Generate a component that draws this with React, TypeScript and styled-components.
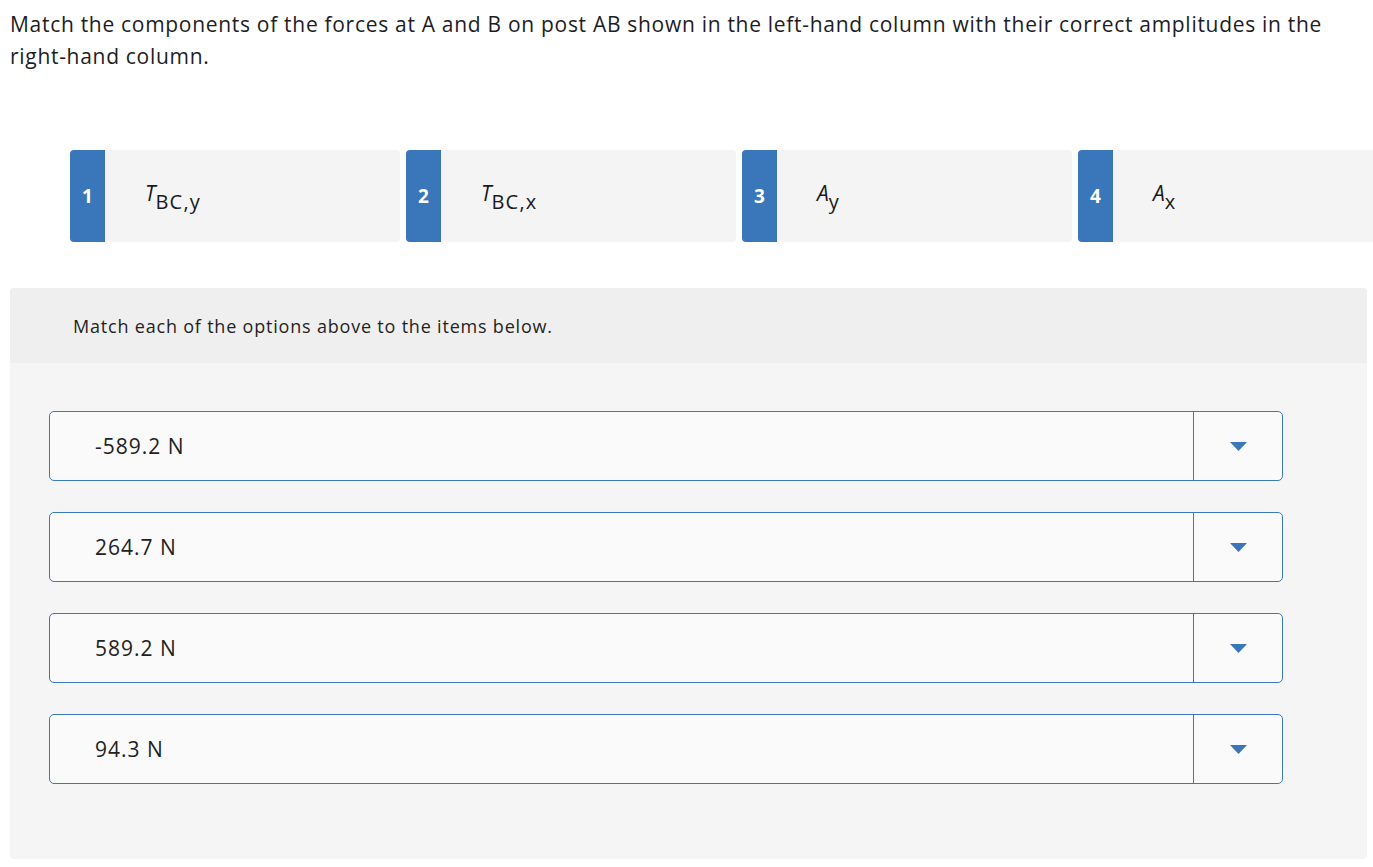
import styled, { createGlobalStyle } from "styled-components";

const Global = createGlobalStyle`
  html, body {
    margin: 0;
    background: #fff;
    overflow-x: hidden;
  }
  body {
    font-family: "Open Sans", Lato, Arial, sans-serif;
    color: #1d1d24;
  }
`;

const Page = styled.div`
  padding: 8px 10px 0 10px;
  width: 1353px;
`;

const Prompt = styled.p`
  margin: 0;
  font-size: 21px;
  line-height: 32px;
  letter-spacing: 0.7px;
`;

const CardRow = styled.div`
  display: flex;
  gap: 6px;
  margin-top: 78px;
  padding-left: 60px;
`;

const Card = styled.div`
  flex: 0 0 330px;
  height: 92px;
  display: flex;
  background: #f4f4f4;
  border-radius: 4px;
  overflow: hidden;
`;

const Badge = styled.div`
  width: 35px;
  flex-shrink: 0;
  background: #3a76ba;
  color: #fff;
  font-weight: 700;
  font-size: 19px;
  display: flex;
  align-items: center;
  justify-content: center;
`;

const Label = styled.div`
  display: flex;
  align-items: center;
  padding-left: 40px;
  font-size: 21px;
  color: #1a1a1a;
`;

const Main = styled.i`
  font-style: italic;
  position: relative;
  top: -3px;
`;

const Sub = styled.span`
  font-size: 20px;
  letter-spacing: 1.2px;
  position: relative;
  top: 5px;
`;

const Panel = styled.div`
  margin-top: 46px;
  width: 1357px;
  background: #f5f5f5;
  border-radius: 4px;
  overflow: hidden;
`;

const PanelHead = styled.div`
  height: 75px;
  background: #efefef;
  display: flex;
  align-items: center;
  padding-left: 63px;
  font-size: 18px;
  letter-spacing: 0.8px;
  color: #1f1f24;
`;

const PanelBody = styled.div`
  display: flex;
  flex-direction: column;
  gap: 31px;
  padding: 48px 84px 75px 39px;
`;

const Select = styled.div`
  height: 70px;
  box-sizing: border-box;
  border: 1px solid #3b78bd;
  border-radius: 5px;
  background: #fafafa;
  display: grid;
  grid-template-columns: 1fr 89px;
`;

const Value = styled.div`
  display: flex;
  align-items: center;
  padding-left: 45px;
  font-size: 21px;
  letter-spacing: 1px;
  color: #222;
`;

const Toggle = styled.div`
  border-left: 1px solid #3b78bd;
  display: flex;
  align-items: center;
  justify-content: center;
`;

const Caret = () => (
  <svg width="17" height="9" viewBox="0 0 17 9">
    <path d="M0 0 H17 L8.5 9 Z" fill="#3a76ba" />
  </svg>
);

const items: { n: number; main: string; sub: string }[] = [
  { n: 1, main: "T", sub: "BC,y" },
  { n: 2, main: "T", sub: "BC,x" },
  { n: 3, main: "A", sub: "y" },
  { n: 4, main: "A", sub: "x" },
];

const values = ["-589.2 N", "264.7 N", "589.2 N", "94.3 N"];

export default function App() {
  return (
    <Page>
      <Global />
      <Prompt>
        Match the components of the forces at A and B on post AB shown in the left-hand column with their correct
        amplitudes in the right-hand column.
      </Prompt>
      <CardRow>
        {items.map((it) => (
          <Card key={it.n}>
            <Badge>{it.n}</Badge>
            <Label>
              <Main>{it.main}</Main>
              <Sub>{it.sub}</Sub>
            </Label>
          </Card>
        ))}
      </CardRow>
      <Panel>
        <PanelHead>Match each of the options above to the items below.</PanelHead>
        <PanelBody>
          {values.map((v) => (
            <Select key={v}>
              <Value>{v}</Value>
              <Toggle>
                <Caret />
              </Toggle>
            </Select>
          ))}
        </PanelBody>
      </Panel>
    </Page>
  );
}
